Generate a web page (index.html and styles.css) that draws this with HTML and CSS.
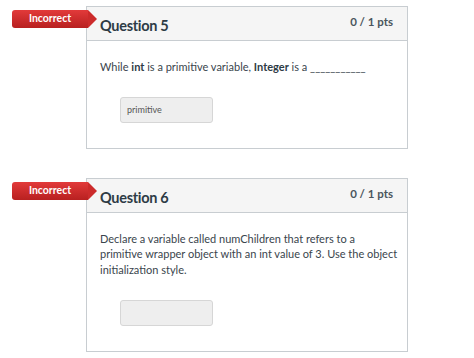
FILE: index.html
```html
<!DOCTYPE html>
<html>
<head>
<meta charset="utf-8">
<link rel="stylesheet" href="styles.css">
</head>
<body>
<div class="page">
  <div class="question q5">
    <div class="badge">Incorrect</div>
    <div class="card">
      <div class="card-header">
        <span class="title">Question 5</span>
        <span class="pts">0 / 1 pts</span>
      </div>
      <div class="card-body">
        <p class="text">While <b>int</b> is a primitive variable, <b>Integer</b> is a ___________</p>
        <div class="answer">primitive</div>
      </div>
    </div>
  </div>
  <div class="question q6">
    <div class="badge">Incorrect</div>
    <div class="card">
      <div class="card-header">
        <span class="title">Question 6</span>
        <span class="pts">0 / 1 pts</span>
      </div>
      <div class="card-body">
        <p class="text">Declare a variable called numChildren that refers to a primitive wrapper object with an int value of 3. Use the object initialization style.</p>
        <div class="answer"></div>
      </div>
    </div>
  </div>
</div>
</body>
</html>
```
FILE: styles.css
```css
html, body {
  margin: 0;
  padding: 0;
  background: #ffffff;
}
body {
  font-family: Lato, "Noto Sans", sans-serif;
  color: #2d3b45;
}
.page {
  padding: 6px 0 0 86px;
  display: flex;
  flex-direction: column;
  gap: 29px;
}
.question {
  position: relative;
  width: 322px;
}
.card {
  border: 1px solid #c8cdd1;
  background: #fff;
}
.card-header {
  background: #f5f5f5;
  border-bottom: 1px solid #c8cdd1;
  height: 33px;
  display: flex;
  align-items: flex-start;
  justify-content: space-between;
  padding: 0 14px 0 13px;
}
.title {
  font-size: 14.5px;
  letter-spacing: -0.3px;
  font-weight: 700;
  color: #2d3b45;
  line-height: 18px;
  margin-top: 10px;
}
.pts {
  font-size: 11.5px;
  font-weight: 700;
  color: #4a555d;
  line-height: 14px;
  margin-top: 8px;
}
.card-body {
  padding: 18px 9px 25px 13px;
}
.text {
  margin: 0;
  font-size: 11px;
  line-height: 15.5px;
  color: #3a454d;
}
.text b {
  font-weight: 700;
  color: #2d3b45;
}
.answer {
  margin: 22px 0 0 20px;
  background: #eeeeee;
  border: 1px solid #d6d6d6;
  border-radius: 3px;
  font-size: 9px;
  color: #555;
  padding: 0 0 0 6px;
  box-sizing: border-box;
  width: 93px;
  height: 26px;
  line-height: 24px;
}
.q6 .answer {
  margin-top: 23px;
}
.badge {
  position: absolute;
  left: -74px;
  top: 4px;
  width: 76px;
  height: 18px;
  background: linear-gradient(#e23a3a, #b82020);
  color: #fff;
  font-size: 10.5px;
  font-weight: 700;
  line-height: 17px;
  text-align: center;
  border-radius: 3px 0 0 3px;
  z-index: 2;
}
.badge::after {
  content: "";
  position: absolute;
  right: -9px;
  top: 0;
  border-top: 9px solid transparent;
  border-bottom: 9px solid transparent;
  border-left: 9px solid #cc2b2b;
}
```
